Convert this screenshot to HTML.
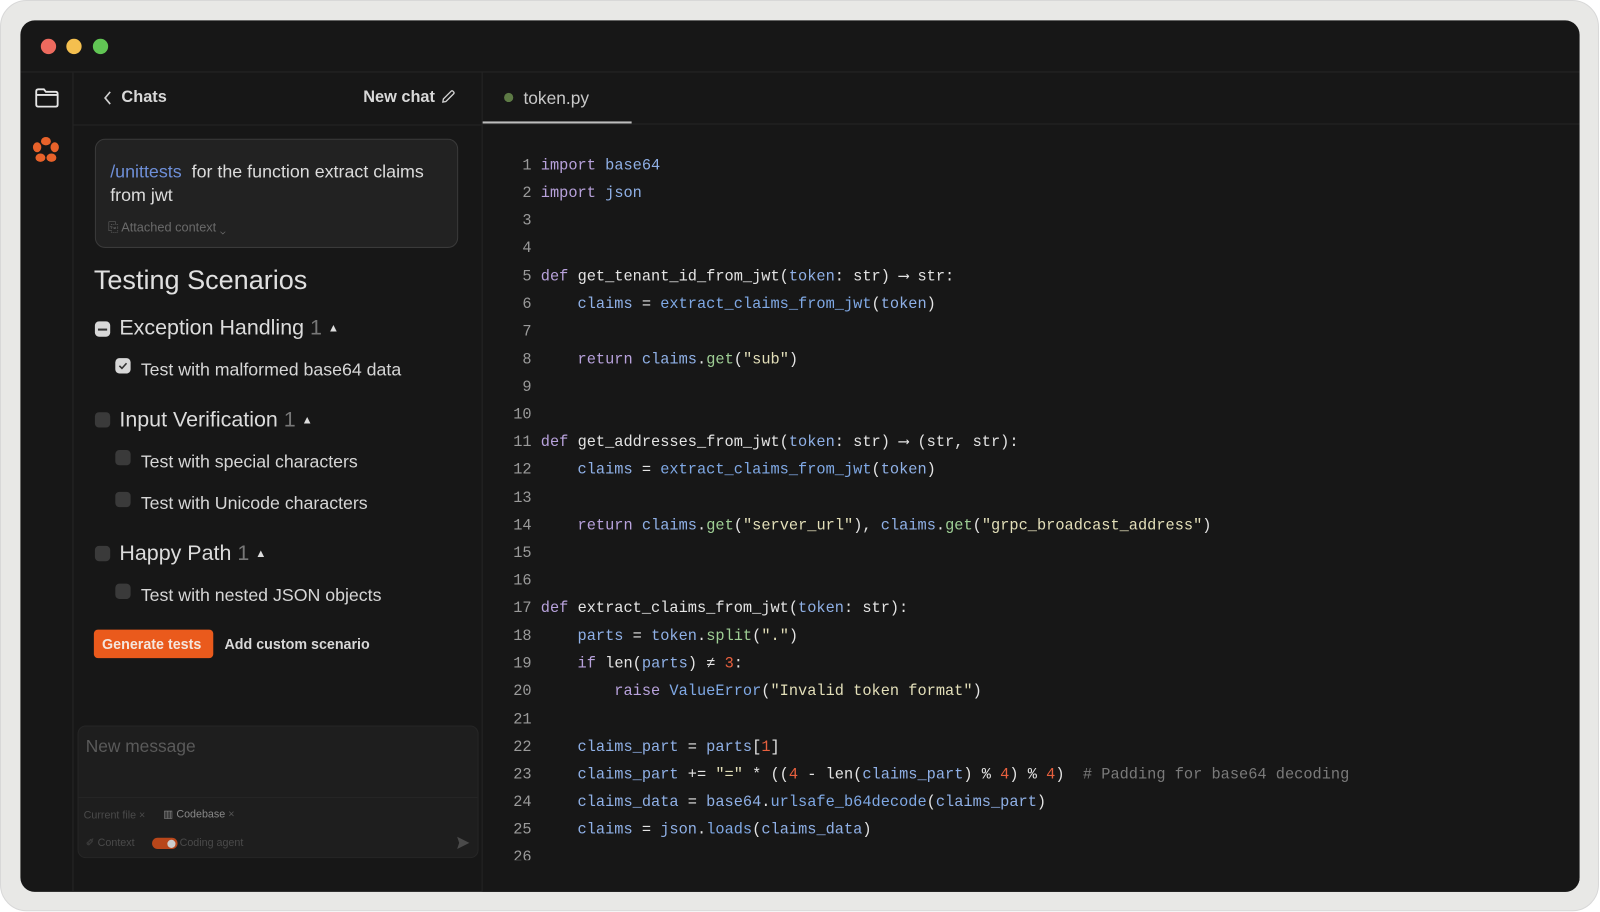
<!DOCTYPE html>
<html><head><meta charset="utf-8"><style>
*{margin:0;padding:0;box-sizing:border-box}
body{width:1600px;height:912px;background:#fff;position:relative;overflow:hidden;font-family:"Liberation Sans",sans-serif}
.root{position:absolute;left:0;top:0;width:1568px;height:894px;transform:scale(1.0204);transform-origin:0 0}
.frame{position:absolute;left:0;top:0;width:1567px;height:893px;background:#e8e8e6;border-radius:26px;border:1px solid #d8d8d8}
.win{position:absolute;left:20px;top:20px;width:1528px;height:854px;background:#171717;border-radius:14px;overflow:hidden}
.dot{position:absolute;top:18px;width:15px;height:15px;border-radius:50%}
.abs{position:absolute}
.hl{position:absolute;background:#262626}
.t{position:absolute;white-space:nowrap;color:#d6d6d6}
.cb{position:absolute;width:15px;height:15px;border-radius:4px;background:#3a3a3a}
.code{position:absolute;left:454px;top:129px;font-family:"Liberation Mono",monospace;font-size:15px;line-height:27.125px;color:#e4e4e4;white-space:pre}
.ln{display:inline-block;width:47px;text-align:right;color:#9a9a9a;margin-right:9px}
.k{color:#b8a2dc}.v{color:#8fb0e6}.f{color:#7fa8e4}.m{color:#9fcf95}.s{color:#e3dfb9}.n{color:#e8603e}.c{color:#7a7a7a}
</style></head><body>
<div class="root">
<div class="frame"></div>
<div class="win">
  <div class="dot" style="left:20px;background:#ec6a5e"></div>
  <div class="dot" style="left:45px;background:#f4bf4f"></div>
  <div class="dot" style="left:71px;background:#61c554"></div>
  <div class="hl" style="left:0;top:50px;width:1528px;height:1px"></div>
  <div class="hl" style="left:51px;top:51px;width:1px;height:803px"></div>
  <div class="hl" style="left:452px;top:51px;width:1px;height:803px"></div>
  <div class="hl" style="left:52px;top:102px;width:400px;height:1px"></div>
  <div class="hl" style="left:453px;top:101px;width:1075px;height:1px"></div>
  <svg class="abs" style="left:14px;top:66px" width="24" height="20" viewBox="0 0 24 20"><path d="M1.5 3.5 Q1.5 1.5 3.5 1.5 H9 L11 4 H20.5 Q22.5 4 22.5 6 V16.5 Q22.5 18.5 20.5 18.5 H3.5 Q1.5 18.5 1.5 16.5 Z M1.5 7 H22.5" fill="none" stroke="#e6e6e6" stroke-width="1.8"/></svg>
  <svg class="abs" style="left:11px;top:113px" width="28" height="28" viewBox="0 0 26 26"><g fill="#e8622a">
  <ellipse cx="13" cy="5" rx="4.5" ry="3.8"/><ellipse cx="21" cy="10.5" rx="3.8" ry="4.5"/><ellipse cx="18" cy="20" rx="4.5" ry="3.8"/><ellipse cx="8" cy="20" rx="4.5" ry="3.8"/><ellipse cx="5" cy="10.5" rx="3.8" ry="4.5"/></g></svg>
  <svg class="abs" style="left:81px;top:68px" width="10" height="16" viewBox="0 0 10 16"><path d="M7 2 L2 8 L7 14" fill="none" stroke="#d0d0d0" stroke-width="1.6"/></svg>
  <div class="t" style="left:99px;top:67px;font-size:16px;font-weight:bold;color:#d8d8d8">Chats</div>
  <div class="t" style="left:336px;top:67px;font-size:16px;font-weight:bold;color:#d8d8d8">New chat</div>
  <svg class="abs" style="left:411px;top:67px" width="16" height="16" viewBox="0 0 16 16"><path d="M3 13 L3.5 10 L11 2.5 Q12 1.5 13 2.5 L13.5 3 Q14.5 4 13.5 5 L6 12.5 Z" fill="none" stroke="#d0d0d0" stroke-width="1.3"/></svg>
  <div class="abs" style="left:73px;top:116px;width:356px;height:107px;background:#222;border:1px solid #3a3a3a;border-radius:10px"></div>
  <div class="t" style="left:88px;top:137px;font-size:17.5px;line-height:23px;color:#dcdcdc"><span style="color:#6e8fd8">/unittests</span>&nbsp; for the function extract claims<br>from jwt</div>
  <div class="t" style="left:86px;top:196px;font-size:12.5px;color:#6a6a6a">&#x2398; Attached context ⌄</div>
  <div class="t" style="left:72px;top:239px;font-size:26.5px;color:#e0e0e0">Testing Scenarios</div>
  <div class="cb" style="left:73px;top:295px;background:#d8d8d8"><div style="position:absolute;left:3px;top:6.5px;width:9px;height:2px;background:#333"></div></div>
  <div class="t" style="left:97px;top:290px;font-size:21px;color:#dcdcdc">Exception Handling <span style="color:#777">1</span> <span style="font-size:11px;vertical-align:3px">▲</span></div>
  <div class="cb" style="left:93px;top:331px;background:#d8d8d8"><svg width="15" height="15" viewBox="0 0 15 15" style="position:absolute;left:0;top:0"><path d="M4 7.5 L6.5 10 L11 5" fill="none" stroke="#333" stroke-width="1.6"/></svg></div>
  <div class="t" style="left:118px;top:332px;font-size:17.4px">Test with malformed base64 data</div>
  <div class="cb" style="left:73px;top:384px"></div>
  <div class="t" style="left:97px;top:380px;font-size:21px;color:#dcdcdc">Input Verification <span style="color:#777">1</span> <span style="font-size:11px;vertical-align:3px">▲</span></div>
  <div class="cb" style="left:93px;top:421px"></div>
  <div class="t" style="left:118px;top:422px;font-size:17.4px">Test with special characters</div>
  <div class="cb" style="left:93px;top:462px"></div>
  <div class="t" style="left:118px;top:463px;font-size:17.4px">Test with Unicode characters</div>
  <div class="cb" style="left:73px;top:515px"></div>
  <div class="t" style="left:97px;top:511px;font-size:21px;color:#dcdcdc">Happy Path <span style="color:#777">1</span> <span style="font-size:11px;vertical-align:3px">▲</span></div>
  <div class="cb" style="left:93px;top:552px"></div>
  <div class="t" style="left:118px;top:553px;font-size:17.4px">Test with nested JSON objects</div>
  <div class="abs" style="left:72px;top:597px;width:117px;height:28px;background:#ea5a1c;border-radius:4px"></div>
  <div class="t" style="left:80px;top:603px;font-size:14px;font-weight:bold;color:#f4e6de">Generate tests</div>
  <div class="t" style="left:200px;top:603px;font-size:14px;font-weight:bold;color:#d8d8d8">Add custom scenario</div>
  <div class="abs" style="left:56px;top:691px;width:393px;height:130px;background:#1e1e1e;border:1px solid #262626;border-radius:8px"></div>
  <div class="hl" style="left:57px;top:761px;width:391px;height:1px"></div>
  <div class="t" style="left:64px;top:702px;font-size:17px;color:#5a5a5a">New message</div>
  <div class="t" style="left:62px;top:773px;font-size:10.5px;color:#4a4a4a">Current file ×</div>
  <div class="t" style="left:140px;top:772px;font-size:10.5px;color:#888">&#x25A5; Codebase <span style="color:#555">×</span></div>
  <div class="t" style="left:64px;top:800px;font-size:10.5px;color:#4a4a4a">&#x2710; Context</div>
  <div class="abs" style="left:129px;top:801px;width:25px;height:11px;background:#b8461a;border-radius:6px"><div style="position:absolute;right:2px;top:1.5px;width:8px;height:8px;border-radius:50%;background:#ccc"></div></div>
  <div class="t" style="left:156px;top:800px;font-size:10.5px;color:#4a4a4a">Coding agent</div>
  <svg class="abs" style="left:427px;top:799px" width="14" height="14" viewBox="0 0 14 14"><path d="M1 1 L13 7 L1 13 L3 7 Z" fill="#4a4a4a"/></svg>
  <svg class="abs" style="left:473px;top:70px" width="11" height="11" viewBox="0 0 11 11"><circle cx="5.5" cy="5.5" r="4.5" fill="#5d7a45"/></svg>
  <div class="t" style="left:493px;top:67px;font-size:17px;color:#c8c8c8">token.py</div>
  <div class="abs" style="left:453px;top:99px;width:146px;height:2px;background:#bdbdbd"></div>
<div class="code"><span class="ln">1</span><span class="k">import</span> <span class="v">base64</span>
<span class="ln">2</span><span class="k">import</span> <span class="v">json</span>
<span class="ln">3</span>
<span class="ln">4</span>
<span class="ln">5</span><span class="k">def</span> get_tenant_id_from_jwt(<span class="v">token</span>: str) ⟶ str:
<span class="ln">6</span>    <span class="v">claims</span> = <span class="f">extract_claims_from_jwt</span>(<span class="v">token</span>)
<span class="ln">7</span>
<span class="ln">8</span>    <span class="k">return</span> <span class="v">claims</span>.<span class="m">get</span>(<span class="s">"sub"</span>)
<span class="ln">9</span>
<span class="ln">10</span>
<span class="ln">11</span><span class="k">def</span> get_addresses_from_jwt(<span class="v">token</span>: str) ⟶ (str, str):
<span class="ln">12</span>    <span class="v">claims</span> = <span class="f">extract_claims_from_jwt</span>(<span class="v">token</span>)
<span class="ln">13</span>
<span class="ln">14</span>    <span class="k">return</span> <span class="v">claims</span>.<span class="m">get</span>(<span class="s">"server_url"</span>), <span class="v">claims</span>.<span class="m">get</span>(<span class="s">"grpc_broadcast_address"</span>)
<span class="ln">15</span>
<span class="ln">16</span>
<span class="ln">17</span><span class="k">def</span> extract_claims_from_jwt(<span class="v">token</span>: str):
<span class="ln">18</span>    <span class="v">parts</span> = <span class="v">token</span>.<span class="m">split</span>(<span class="s">"."</span>)
<span class="ln">19</span>    <span class="k">if</span> len(<span class="v">parts</span>) ≠ <span class="n">3</span>:
<span class="ln">20</span>        <span class="k">raise</span> <span class="f">ValueError</span>(<span class="s">"Invalid token format"</span>)
<span class="ln">21</span>
<span class="ln">22</span>    <span class="v">claims_part</span> = <span class="v">parts</span>[<span class="n">1</span>]
<span class="ln">23</span>    <span class="v">claims_part</span> += <span class="s">"="</span> * ((<span class="n">4</span> - len(<span class="v">claims_part</span>) % <span class="n">4</span>) % <span class="n">4</span>)  <span class="c"># Padding for base64 decoding</span>
<span class="ln">24</span>    <span class="v">claims_data</span> = <span class="v">base64</span>.<span class="f">urlsafe_b64decode</span>(<span class="v">claims_part</span>)
<span class="ln">25</span>    <span class="v">claims</span> = <span class="v">json</span>.<span class="f">loads</span>(<span class="v">claims_data</span>)
<span class="ln">26</span></div>
  <div class="abs" style="left:453px;top:823px;width:1075px;height:31px;background:#171717"></div>
</div>
</div>
</body></html>
